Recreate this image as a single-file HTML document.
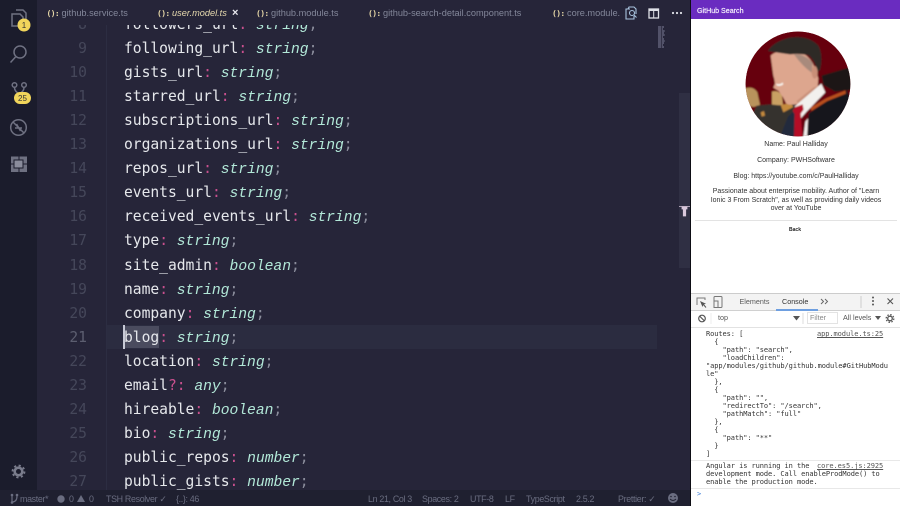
<!DOCTYPE html>
<html><head><meta charset="utf-8"><style>
html,body{margin:0;padding:0;width:900px;height:506px;overflow:hidden;background:#262539}
div,span{box-sizing:border-box}
.a{position:absolute;white-space:pre}
.c{position:absolute;left:124px;height:24px;font:14.65px/24px "DejaVu Sans Mono",monospace;color:#e6e8ec;white-space:pre;letter-spacing:-.02px}
.n{position:absolute;left:40px;width:47px;text-align:right;height:24px;font:14.65px/24px "DejaVu Sans Mono",monospace;color:#45475a}
.c i{font-family:"Liberation Mono",monospace;font-style:italic;color:#b2e8d8;font-size:14.67px}
.c b{font-weight:normal;color:#c9508e}
.c u{text-decoration:none;color:#8b8d9c}
.t{position:absolute;top:6px;height:14px;font:9.2px/14px "Liberation Sans",sans-serif;color:#83879a;white-space:pre}
.t em{display:inline-block;width:15px;font:bold 8px/14px "DejaVu Sans Mono",monospace;color:#e8d9a8;font-style:normal;letter-spacing:-.6px}
.s{position:absolute;top:493px;font:8.9px/12px "Liberation Sans",sans-serif;color:#6a6d80;white-space:pre;letter-spacing:-.33px}
.w{position:absolute;font:7px/9px "Liberation Sans",sans-serif;color:#333;text-align:center;left:692px;width:208px;white-space:pre}
.m{position:absolute;font:7px/8px "DejaVu Sans Mono",monospace;color:#333;white-space:pre;letter-spacing:-.08px}
.d{position:absolute;font:7.2px/10px "Liberation Sans",sans-serif;color:#555;white-space:pre}
</style></head><body>
<div class="a" style="left:0;top:0;width:691px;height:506px;background:#262539"></div>
<div class="a" style="left:0;top:0;width:37px;height:490px;background:#1b1c2c"></div>
<div class="a" style="left:106px;top:25px;width:1px;height:465px;background:#2c2d42"></div>
<div class="a" style="left:107px;top:325px;width:550px;height:24px;background:#2b2c40"></div>
<div class="a" style="left:124px;top:326px;width:35px;height:22px;background:#4a4b5e"></div>
<div class="a" style="left:123px;top:325px;width:2px;height:24px;background:#c8cad6"></div>
<div class="a" style="left:679px;top:93px;width:11px;height:175px;background:#2f2f43"></div>

<div class="a" style="left:0;top:1px;width:691px;height:490px">
<div class="n" style="top:12px">8</div><div class="c" style="top:12px">followers_url<b>:</b> <i>string</i><u>;</u></div>
<div class="n" style="top:36px">9</div><div class="c" style="top:36px">following_url<b>:</b> <i>string</i><u>;</u></div>
<div class="n" style="top:60px">10</div><div class="c" style="top:60px">gists_url<b>:</b> <i>string</i><u>;</u></div>
<div class="n" style="top:84px">11</div><div class="c" style="top:84px">starred_url<b>:</b> <i>string</i><u>;</u></div>
<div class="n" style="top:108px">12</div><div class="c" style="top:108px">subscriptions_url<b>:</b> <i>string</i><u>;</u></div>
<div class="n" style="top:132px">13</div><div class="c" style="top:132px">organizations_url<b>:</b> <i>string</i><u>;</u></div>
<div class="n" style="top:156px">14</div><div class="c" style="top:156px">repos_url<b>:</b> <i>string</i><u>;</u></div>
<div class="n" style="top:180px">15</div><div class="c" style="top:180px">events_url<b>:</b> <i>string</i><u>;</u></div>
<div class="n" style="top:204px">16</div><div class="c" style="top:204px">received_events_url<b>:</b> <i>string</i><u>;</u></div>
<div class="n" style="top:228px">17</div><div class="c" style="top:228px">type<b>:</b> <i>string</i><u>;</u></div>
<div class="n" style="top:253px">18</div><div class="c" style="top:253px">site_admin<b>:</b> <i>boolean</i><u>;</u></div>
<div class="n" style="top:277px">19</div><div class="c" style="top:277px">name<b>:</b> <i>string</i><u>;</u></div>
<div class="n" style="top:301px">20</div><div class="c" style="top:301px">company<b>:</b> <i>string</i><u>;</u></div>
<div class="n" style="top:325px;color:#5c5e70">21</div><div class="c" style="top:325px">blog<b>:</b> <i>string</i><u>;</u></div>
<div class="n" style="top:349px">22</div><div class="c" style="top:349px">location<b>:</b> <i>string</i><u>;</u></div>
<div class="n" style="top:373px">23</div><div class="c" style="top:373px">email<b>?:</b> <i>any</i><u>;</u></div>
<div class="n" style="top:397px">24</div><div class="c" style="top:397px">hireable<b>:</b> <i>boolean</i><u>;</u></div>
<div class="n" style="top:421px">25</div><div class="c" style="top:421px">bio<b>:</b> <i>string</i><u>;</u></div>
<div class="n" style="top:445px">26</div><div class="c" style="top:445px">public_repos<b>:</b> <i>number</i><u>;</u></div>
<div class="n" style="top:469px">27</div><div class="c" style="top:469px">public_gists<b>:</b> <i>number</i><u>;</u></div>
</div>

<div class="a" style="left:37px;top:0;width:654px;height:25px;background:#262539"></div>
<div class="t" style="left:46.500px"><em>():</em>github.service.ts</div>
<div class="t" style="left:157px;color:#e6d9ae;font-style:italic"><em>():</em>user.model.ts</div>
<div class="t" style="left:232px;color:#e8e8ee;font-weight:bold;font-size:11px">×</div>
<div class="t" style="left:256px"><em>():</em>github.module.ts</div>
<div class="t" style="left:368px"><em>():</em>github-search-detail.component.ts</div>
<div class="t" style="left:552px"><em>():</em>core.module.</div>

<svg class="a" style="left:0;top:0" width="691" height="506" viewBox="0 0 691 506">
<g fill="none" stroke="#6f7182" stroke-width="1.500">
<path d="M16 10h7l3 3v11h-3M12 14h8l3 3v9h-11z"/>
<circle cx="20" cy="52" r="6"/><path d="M15.500 57l-5 5.500"/>
<circle cx="14.500" cy="85" r="2.300"/><circle cx="24" cy="85" r="2.300"/><path d="M14.500 87.500q0 4 4.500 6M24 87.500q0 4-4.500 6"/>
<circle cx="18.500" cy="127.500" r="7.800"/><path d="M13 122l11 11M15 128h7M16.500 124l4 7"/>
</g>
<path d="M11 156.500h16v15.500h-16z" fill="#6f7182"/>
<path d="M14 160h9v8h-9z" fill="#8a8c9c" stroke="#1b1c2c" stroke-width="1"/>
<path d="M19 156.500v3M11 164h3M19 168v4M23 164h4" stroke="#1b1c2c" stroke-width="1"/>
<circle cx="24" cy="25" r="6.500" fill="#f1d55b"/>
<rect x="14" y="92" width="17" height="12" rx="6" fill="#f1d55b"/>
<text x="24" y="28" text-anchor="middle" font-family="Liberation Sans" font-size="8" fill="#333">1</text>
<text x="22.500" y="101" text-anchor="middle" font-family="Liberation Sans" font-size="8" fill="#333">25</text>
<circle cx="18.500" cy="471.500" r="3.800" fill="none" stroke="#7a7c8c" stroke-width="2.600"/>
<circle cx="18.500" cy="471.500" r="6" fill="none" stroke="#7a7c8c" stroke-width="1.800" stroke-dasharray="2.200 2.500"/>
<g fill="none" stroke="#a9c4de" stroke-width="1.100">
<path d="M630 9h-4v10h8v-3M628 9l1-2h5l2 2v5"/><circle cx="632" cy="13" r="2.500"/><path d="M634 15l2.500 2.500"/>
</g>
<rect x="649" y="9" width="9.500" height="9" fill="none" stroke="#dfe1e8" stroke-width="1.300"/><rect x="649" y="9" width="9.500" height="2" fill="#dfe1e8"/><path d="M653.700 9v9" stroke="#dfe1e8"/>
<circle cx="673" cy="13" r="1.100" fill="#dfe1e8"/><circle cx="677" cy="13" r="1.100" fill="#dfe1e8"/><circle cx="681" cy="13" r="1.100" fill="#dfe1e8"/>
<g stroke="#7d8099" stroke-width="1" stroke-dasharray="3 .7">
<path d="M658 27h6M658 29h5M658 31h7M658 33h6M658 35h7M658 37h5M658 39h6M658 41h7M658 43h6M658 45h5M658 47h6"/>
</g>
<path d="M679 206.500h11M682 207h5v2h-1.300v7h-2.400v-7H682z" fill="#d9c8dc" stroke="#d9c8dc" stroke-width=".8"/>
</svg>

<div class="a" style="left:0;top:490px;width:691px;height:16px;background:#1f2030"></div>
<svg class="a" style="left:10px;top:493px" width="70" height="12"><path d="M2 1v9M2 9q5 0 5-6" fill="none" stroke="#6a6d80" stroke-width="1.200"/><circle cx="2" cy="2" r="1.300" fill="#6a6d80"/><circle cx="7" cy="2" r="1.300" fill="#6a6d80"/><circle cx="2" cy="9.500" r="1.300" fill="#6a6d80"/>
<circle cx="51" cy="6" r="3.700" fill="#6a6d80"/></svg>
<div class="s" style="left:20px">master*</div>
<div class="s" style="left:69px">0</div>
<svg class="a" style="left:77px;top:494px" width="10" height="10"><path d="M4 1l4 7H0z" fill="#6a6d80"/></svg>
<div class="s" style="left:89px">0</div>
<div class="s" style="left:106px">TSH Resolver ✓</div>
<div class="s" style="left:176px">{..}: 46</div>
<div class="s" style="left:368px">Ln 21, Col 3</div>
<div class="s" style="left:422px">Spaces: 2</div>
<div class="s" style="left:470px">UTF-8</div>
<div class="s" style="left:505px">LF</div>
<div class="s" style="left:526px">TypeScript</div>
<div class="s" style="left:576px">2.5.2</div>
<div class="s" style="left:618px">Prettier: ✓</div>
<svg class="a" style="left:667px;top:492px" width="12" height="12"><circle cx="6" cy="6" r="5" fill="#6a6d80"/><circle cx="4" cy="4.500" r=".8" fill="#1f2030"/><circle cx="8" cy="4.500" r=".8" fill="#1f2030"/><path d="M3 7q3 3 6 0" stroke="#1f2030" fill="none"/></svg>

<div class="a" style="left:690px;top:0;width:2px;height:506px;background:#0d0d14"></div>
<div class="a" style="left:691px;top:0;width:209px;height:506px;background:#fff"></div>
<div class="a" style="left:691px;top:0;width:209px;height:19px;background:#6a2cc0"></div>
<div class="a" style="left:697px;top:6px;font:7.100px/10px 'Liberation Sans',sans-serif;color:#f4eefc;-webkit-text-stroke:.2px #f4eefc">GitHub Search</div>

<svg class="a" style="left:740px;top:25px" width="115" height="115" viewBox="0 0 345 345">
<defs><clipPath id="q"><circle cx="174" cy="177" r="157"/></clipPath><filter id="f" x="-10%" y="-10%" width="120%" height="120%"><feGaussianBlur stdDeviation="2.200"/></filter></defs>
<g clip-path="url(#q)"><rect width="345" height="345" fill="#660308"/><g filter="url(#f)">
<rect width="345" height="345" fill="#660308"/>
<path d="M245 152l95-28v70l-55 6-35-20z" fill="#1a1214"/>
<path d="M10 192q28-12 42 10l8 38-20 6-30-10z" fill="#b9935c"/>
<path d="M96 200q20-6 30 12l3 28-33 4z" fill="#c9a064"/>
<path d="M50 242l40-4 40 4 35-10 10 113H60l-30-60z" fill="#34312f"/>
<path d="M122 240l30-6 8 12-30 16zM62 262l10-4 3 14-10 3z" fill="#c48a3c"/>
<path d="M92 92Q110 75 150 75l40 10q25 15 35 45l10 30-2 25-28 25-25 25q-30 8-42 0-6-15-14-25l-8-12-16-10 5-12-2-14-3-10z" fill="#dda68e"/>
<path d="M170 228l50-40 20-8 6 12-50 40-20 10z" fill="#c99079"/>
<path d="M108 176q12 4 20-4l2 6q-10 8-20 3z" fill="#f7f2ec"/>
<path d="M84 78Q100 50 150 38q55-8 85 24 15 28 5 73l-8 5q-7-35-27-50-30-5-55-2-25-3-66-10z" fill="#2e2a28"/>
<path d="M162 88q30-2 56 25l-3 30q-28-20-53-55z" fill="#a88a7c"/>
<ellipse cx="224" cy="142" rx="9" ry="19" fill="#c98f78"/>
<path d="M164 244l80-68 12 26-56 58-26 30-8-40z" fill="#f2f0ed"/>
<path d="M200 345l6-80 50-34 65-34 25 60v88z" fill="#17161c"/>
<path d="M212 248l46-28 58-24 2 10-56 22-48 30z" fill="#b9501d"/>
<path d="M116 345l28-70 22-22v92z" fill="#232a3c"/>
<path d="M166 246l22-8 3 16-9 12 6 79h-26l2-78-6-10z" fill="#b40f27"/>
<path d="M196 290l8-10-3 65h-12z" fill="#f1efec"/>
</g></g></svg>

<div class="w" style="top:140px">Name: Paul Halliday</div>
<div class="w" style="top:156px">Company: PWHSoftware</div>
<div class="w" style="top:172px">Blog: https://youtube.com/c/PaulHalliday</div>
<div class="w" style="top:188px;line-height:8.500px">Passionate about enterprise mobility. Author of "Learn
Ionic 3 From Scratch", as well as providing daily videos
over at YouTube</div>
<div class="a" style="left:695px;top:220px;width:202px;height:1px;background:#e3e3e3"></div>
<div class="w" style="top:226px;font:bold 5px/9px 'Liberation Sans',sans-serif;left:691px;color:#222">Back</div>

<div class="a" style="left:691px;top:293px;width:209px;height:18px;background:#f3f3f3;border-top:1px solid #ccc;border-bottom:1px solid #d0d0d0"></div>
<svg class="a" style="left:691px;top:293px" width="209" height="38">
<path d="M6 12V5h8v2" fill="none" stroke="#777"/><path d="M9 8l2.500 6 1-2.500 2.500-.800z" fill="#555"/><path d="M12 11l3 3.500" stroke="#555"/>
<rect x="23" y="3.500" width="8" height="11" rx="1" fill="none" stroke="#777"/><rect x="23" y="8" width="4" height="6.500" fill="#f3f3f3" stroke="#777"/>
<path d="M170 3v12" stroke="#ccc"/>
<circle cx="182" cy="4.500" r="1" fill="#555"/><circle cx="182" cy="8" r="1" fill="#555"/><circle cx="182" cy="11.500" r="1" fill="#555"/>
<path d="M196.500 5.500l5.500 5.500M202 5.500l-5.500 5.500" stroke="#555" stroke-width="1.100"/>
<path d="M130 6l2.500 2.500L130 11M134 6l2.500 2.500L134 11" fill="none" stroke="#666"/>
<circle cx="11" cy="25.500" r="3.300" fill="none" stroke="#555" stroke-width="1.200"/><path d="M8.500 23l5 5" stroke="#555" stroke-width="1.200"/>
<path d="M102 23h7l-3.500 4.500z" fill="#555"/>
<path d="M184 23h6l-3 4z" fill="#555"/>
<circle cx="199" cy="25.500" r="2.300" fill="none" stroke="#555" stroke-width="1.300"/><circle cx="199" cy="25.500" r="3.800" fill="none" stroke="#555" stroke-width="1.300" stroke-dasharray="1.500 1.500"/>
<path d="M112 20v11" stroke="#ddd"/><path d="M20 20v11" stroke="#eee"/>
</svg>
<div class="d" style="left:739.500px;top:297px;color:#5a5a5a">Elements</div>
<div class="d" style="left:782px;top:297px;color:#333">Console</div>
<div class="a" style="left:776px;top:309px;width:42px;height:2px;background:#6e9fe0"></div>
<div class="d" style="left:718px;top:313px">top</div>
<div class="a" style="left:807px;top:312px;width:31px;height:12px;border:1px solid #e3e3e3"></div>
<div class="d" style="left:810px;top:313px;color:#888">Filter</div>
<div class="d" style="left:843px;top:313px">All levels</div>
<div class="a" style="left:691px;top:327px;width:209px;height:1px;background:#e2e2e2"></div>

<div class="m" style="left:706px;top:330px">Routes: [
  {
    "path": "search",
    "loadChildren":
"app/modules/github/github.module#GitHubModu
le"
  },
  {
    "path": "",
    "redirectTo": "/search",
    "pathMatch": "full"
  },
  {
    "path": "**"
  }
]</div>
<div class="m" style="left:817px;top:330px;color:#555;text-decoration:underline">app.module.ts:25</div>
<div class="a" style="left:691px;top:460px;width:209px;height:1px;background:#e8e8e8"></div>
<div class="m" style="left:706px;top:462px">Angular is running in the
development mode. Call enableProdMode() to
enable the production mode.</div>
<div class="m" style="left:817px;top:462px;color:#555;text-decoration:underline">core.es5.js:2925</div>
<div class="a" style="left:691px;top:488px;width:209px;height:1px;background:#e8e8e8"></div>
<div class="m" style="left:697px;top:490px;color:#3a7bd5">&gt;</div>
</body></html>
